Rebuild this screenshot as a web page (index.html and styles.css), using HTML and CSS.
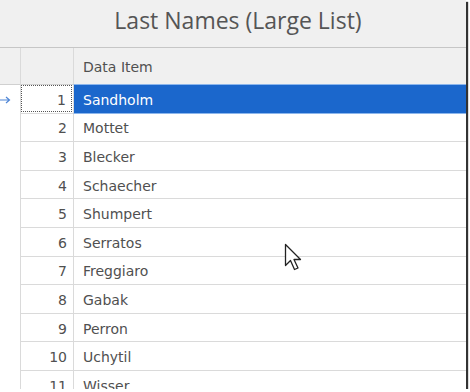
FILE: index.html
```html
<!DOCTYPE html>
<html lang="en">
<head>
    <meta charset="UTF-8">
    <title>Last Names (Large List)</title>
    <link rel="stylesheet" href="styles.css">
</head>
<body>
    <div class="window">
        <div class="title">Last Names (Large List)</div>
        <div class="grid">
            <div class="row header">
                <div class="indicator"></div>
                <div class="num"></div>
                <div class="item">Data Item</div>
            </div>
            <div class="row selected">
                <div class="indicator">
                    <svg width="11" height="8" viewBox="0 0 11 8"><path d="M0 4H9M6 1L9.5 4L6 7" fill="none" stroke="#4f86d6" stroke-width="1.2"/></svg>
                </div>
                <div class="num"><span class="focus">1</span></div>
                <div class="item">Sandholm</div>
            </div>
            <div class="row"><div class="indicator"></div><div class="num">2</div><div class="item">Mottet</div></div>
            <div class="row"><div class="indicator"></div><div class="num">3</div><div class="item">Blecker</div></div>
            <div class="row"><div class="indicator"></div><div class="num">4</div><div class="item">Schaecher</div></div>
            <div class="row"><div class="indicator"></div><div class="num">5</div><div class="item">Shumpert</div></div>
            <div class="row"><div class="indicator"></div><div class="num">6</div><div class="item">Serratos</div></div>
            <div class="row"><div class="indicator"></div><div class="num">7</div><div class="item">Freggiaro</div></div>
            <div class="row"><div class="indicator"></div><div class="num">8</div><div class="item">Gabak</div></div>
            <div class="row"><div class="indicator"></div><div class="num">9</div><div class="item">Perron</div></div>
            <div class="row"><div class="indicator"></div><div class="num">10</div><div class="item">Uchytil</div></div>
            <div class="row"><div class="indicator"></div><div class="num">11</div><div class="item">Wisser</div></div>
        </div>
        <!-- mouse pointer over the grid -->
        <svg class="cursor" width="20" height="30" viewBox="0 0 20 30">
            <path d="M1.5 1.5V22.5L6.5 17.5L10.5 26.5L14 25L10 16.5H16.5Z" fill="#fff" stroke="#222" stroke-width="1.3" stroke-linejoin="round"/>
        </svg>
    </div>
</body>
</html>
```

FILE: styles.css
```css
body {
    margin: 0;
    background-color: #fff;
    font-family: 'DejaVu Sans', sans-serif;
}
.window {
    position: relative;
    width: 466px;
    height: 389px;
    overflow: hidden;
    background-color: #fff;
    box-shadow: 2px 2px 1px #333;
}
.title {
    height: 47px;
    line-height: 41px;
    padding-left: 10px;
    background-color: #f0f0f0;
    border-bottom: 1px solid #c6c6c6;
    text-align: center;
    font-family: 'Open Sans', sans-serif;
    font-size: 23px;
    color: #555;
}
.grid {
    display: flex;
    flex-direction: column;
}
.row {
    display: flex;
    height: 28.6px;
    font-size: 14px;
    color: #505050;
}
.indicator {
    width: 20px;
    display: flex;
    align-items: center;
    padding-top: 1px;
}
.num {
    width: 53px;
    box-sizing: border-box;
    border-left: 1px solid #dadada;
    border-bottom: 1px solid #dadada;
    display: flex;
    align-items: center;
    justify-content: flex-end;
    padding-right: 6px;
    padding-top: 2px;
}
.item {
    flex: 1;
    border-left: 1px solid #dadada;
    border-bottom: 1px solid #dadada;
    display: flex;
    align-items: center;
    padding-left: 9px;
    padding-top: 2px;
}
.header {
    height: 37px;
    background-color: #f0f0f0;
}
.header .indicator,
.header .num,
.header .item {
    border-bottom: 1px solid #d0d0d0;
}
.selected .num {
    position: relative;
}
.selected .item {
    background-color: #1b67cc;
    color: #fff;
    border-top: 1px solid #8cb6ec;
    border-bottom: 1px solid #8cb6ec;
    margin-top: -1px;
}
.focus {
    position: absolute;
    left: 0;
    top: 0;
    width: 51px;
    height: 27px;
    box-sizing: border-box;
    border: 1px dotted #555;
    display: flex;
    align-items: center;
    justify-content: flex-end;
    padding-right: 5px;
    padding-top: 2px;
}
.cursor {
    position: absolute;
    left: 284px;
    top: 243px;
}
```
